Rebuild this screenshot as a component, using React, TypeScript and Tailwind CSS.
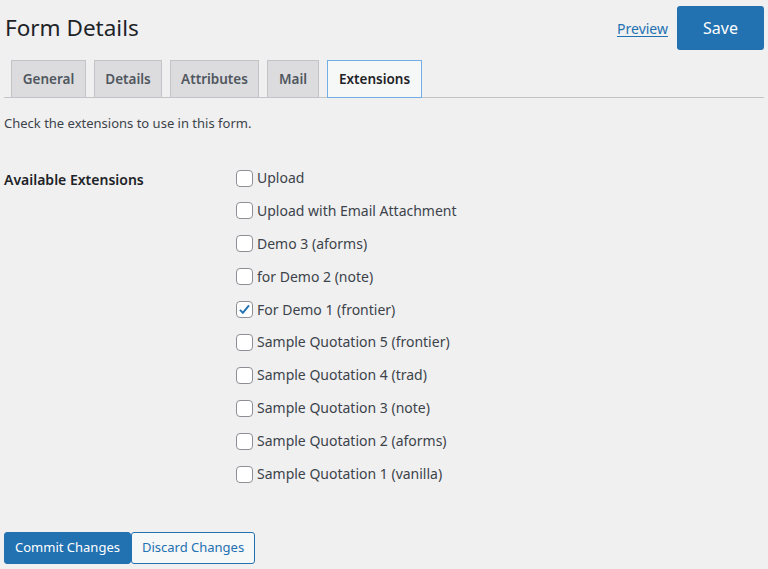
import { useState } from "react";

const tabs = ["General", "Details", "Attributes", "Mail", "Extensions"];
const tabWidths: Record<string, string> = {
	General: "w-[75px]",
	Details: "w-[68px]",
	Attributes: "w-[89px]",
	Mail: "w-[52px]",
	Extensions: "w-[95px]",
};

const extensions = [
	"Upload",
	"Upload with Email Attachment",
	"Demo 3 (aforms)",
	"for Demo 2 (note)",
	"For Demo 1 (frontier)",
	"Sample Quotation 5 (frontier)",
	"Sample Quotation 4 (trad)",
	"Sample Quotation 3 (note)",
	"Sample Quotation 2 (aforms)",
	"Sample Quotation 1 (vanilla)",
];

export default function App() {
	const [checked, setChecked] = useState<string[]>(["For Demo 1 (frontier)"]);

	function toggle(name: string) {
		setChecked((c) => (c.includes(name) ? c.filter((n) => n !== name) : [...c, name]));
	}

	return (
		<main className="min-h-[569px] bg-[#f0f0f1] px-[4px] font-['Noto_Sans',sans-serif] text-[#3c434a]">
			<header className="flex items-center justify-between pt-[6px]">
				<h1 className="pl-[1px] text-[22.5px] leading-[44px] text-[#1d2327]">Form Details</h1>
				<div className="flex items-center gap-[9px]">
					<a href="#" className="text-[14px] text-[#2271b1] underline underline-offset-2">
						Preview
					</a>
					<button className="h-[44px] w-[87px] rounded-[3px] bg-[#2271b1] text-[16px] text-white">
						Save
					</button>
				</div>
			</header>

			<nav className="mt-[10px] flex gap-[8px] border-b border-[#c3c4c7] pl-[7px]">
				{tabs.map((t) =>
					t === "Extensions" ? (
						<div
							key={t}
							className={`${tabWidths[t]} mb-[-1px] flex h-[38px] shrink-0 items-center justify-center overflow-hidden border border-[#72aee6] bg-[#f6f7f7] text-[13.5px] font-semibold text-[#1d2327]`}
						>
							{t}
						</div>
					) : (
						<div
							key={t}
							className={`${tabWidths[t]} flex h-[37px] shrink-0 items-center justify-center overflow-hidden border border-b-0 border-[#c3c4c7] bg-[#dcdcde] text-[13.5px] font-semibold text-[#50575e]`}
						>
							{t}
						</div>
					),
				)}
			</nav>

			<p className="mt-[16px] text-[13px] leading-[18px] text-[#3c434a]">Check the extensions to use in this form.</p>

			<section className="mt-[36px] flex">
				<div className="w-[232px] pt-[1px] text-[14px] font-semibold text-[#1d2327]">Available Extensions</div>
				<ul className="flex flex-col">
					{extensions.map((name) => {
						const on = checked.includes(name);
						return (
							<li key={name} className="flex h-[32.9px] items-start">
								<label className="flex cursor-pointer items-center gap-[4px] text-[14px] leading-[20px] text-[#3c434a]">
									<span
										onClick={() => toggle(name)}
										className="flex h-[17px] w-[17px] items-center justify-center rounded-[4px] border border-[#8c8f94] bg-white"
									>
										{on && (
											<svg viewBox="0 0 20 20" className="h-[15px] w-[15px]">
												<path d="M4 10.5l3.8 4L16 4.5" fill="none" stroke="#2271b1" strokeWidth="2.6" />
											</svg>
										)}
									</span>
									<span>{name}</span>
								</label>
							</li>
						);
					})}
				</ul>
			</section>

			<div className="mt-[35px] flex">
				<button className="h-[32px] rounded-[3px] border border-[#2271b1] bg-[#2271b1] px-[10px] text-[13px] text-white">
					Commit Changes
				</button>
				<button className="h-[32px] rounded-[3px] border border-[#2271b1] bg-[#f6f7f7] px-[10px] text-[13px] text-[#2271b1]">
					Discard Changes
				</button>
			</div>
		</main>
	);
}
